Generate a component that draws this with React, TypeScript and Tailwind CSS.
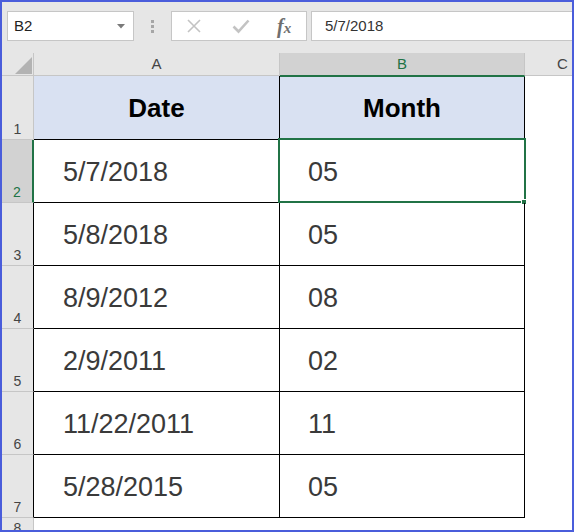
import React from "react";

const rows = [
  { n: 2, date: "5/7/2018", month: "05" },
  { n: 3, date: "5/8/2018", month: "05" },
  { n: 4, date: "8/9/2012", month: "08" },
  { n: 5, date: "2/9/2011", month: "02" },
  { n: 6, date: "11/22/2011", month: "11" },
  { n: 7, date: "5/28/2015", month: "05" },
];

function FormulaBar() {
  return (
    <div className="h-[51px] shrink-0 bg-[#e6e6e6] flex items-start pt-[9px] pl-[5px]">
      <div className="w-[127px] h-[30px] bg-white border border-[#c6c6c6] flex items-center justify-between pl-[6px] pr-[8px]">
        <span className="text-[15px] text-[#222]">B2</span>
        <svg width="8" height="5" viewBox="0 0 8 5">
          <polygon points="0,0 8,0 4,4.5" fill="#7a7a7a" />
        </svg>
      </div>
      <div className="w-[37px] h-[30px] flex flex-col items-center justify-center gap-[2px]">
        <span className="w-[3px] h-[3px] bg-[#a6a6a6]" />
        <span className="w-[3px] h-[3px] bg-[#a6a6a6]" />
        <span className="w-[3px] h-[3px] bg-[#a6a6a6]" />
      </div>
      <div className="w-[136px] h-[30px] bg-white border border-[#c6c6c6] flex items-center pl-[14px]">
        <svg width="16" height="16" viewBox="0 0 16 16">
          <path d="M2 2 L14 14 M14 2 L2 14" stroke="#c3c3c3" strokeWidth="1.6" fill="none" />
        </svg>
        <svg width="18" height="16" viewBox="0 0 18 16" className="ml-[30px]">
          <path d="M1.5 8.5 L6.5 13.5 L16.5 2.5" stroke="#c3c3c3" strokeWidth="2.6" fill="none" />
        </svg>
        <span className="ml-[27px] font-['Liberation_Serif',serif] italic font-bold text-[#6f6f6f] leading-none">
          <span className="text-[20px]">f</span>
          <span className="text-[15px]">x</span>
        </span>
      </div>
      <div className="flex-1 h-[30px] ml-[4px] bg-white border border-[#c6c6c6] border-r-0 flex items-center pl-[13px]">
        <span className="text-[15px] text-[#333]">5/7/2018</span>
      </div>
    </div>
  );
}

function ColumnHeaders() {
  return (
    <div className="h-[23px] shrink-0 flex text-[15px] text-[#444]">
      <div className="w-[32px] shrink-0 bg-[#e6e6e6] border-r border-b border-[#c6c6c6] flex items-end justify-end pr-[1px] pb-[1px]">
        <svg width="17" height="17" viewBox="0 0 17 17">
          <polygon points="17,0 17,17 0,17" fill="#b3b3b3" />
        </svg>
      </div>
      <div className="w-[246px] shrink-0 bg-[#e6e6e6] border-r border-b border-[#c6c6c6] flex items-center justify-center">
        A
      </div>
      <div className="w-[245px] shrink-0 relative z-10 bg-[#d2d2d2] border-r border-[#c6c6c6] border-b border-b-[#217346] shadow-[0_1px_0_#217346] flex items-center justify-center text-[#217346]">
        B
      </div>
      <div className="w-[75px] shrink-0 bg-[#e6e6e6] border-b border-[#c6c6c6] flex items-center justify-center">
        C
      </div>
    </div>
  );
}

export default function App() {
  return (
    <div className="w-[574px] h-[532px] border-2 border-[#4a5ddb] bg-white overflow-hidden flex flex-col font-['Liberation_Sans',Arial,sans-serif]">
      <FormulaBar />
      <ColumnHeaders />

      {/* header row */}
      <div className="h-[64px] shrink-0 flex">
        <div className="w-[32px] shrink-0 bg-[#e6e6e6] border-r border-b border-[#c6c6c6] flex items-end justify-center pb-[3px] text-[14px] leading-none text-[#444]">
          1
        </div>
        <div className="w-[246px] shrink-0 bg-[#d9e1f2] border-r border-b border-black flex items-center justify-center text-[26px] font-bold leading-none text-black">
          Date
        </div>
        <div className="w-[245px] shrink-0 bg-[#d9e1f2] border-r border-b border-black flex items-center justify-center text-[26px] font-bold leading-none text-black">
          Month
        </div>
        <div className="flex-1" />
      </div>

      {rows.map((r) => {
        const selected = r.n === 2;
        return (
          <div key={r.n} className="h-[63px] shrink-0 flex">
            <div
              className={
                selected
                  ? "w-[32px] shrink-0 bg-[#d2d2d2] border-b border-b-[#c6c6c6] border-r-2 border-r-[#217346] flex items-end justify-center pb-[3px] text-[14px] leading-none text-[#217346]"
                  : "w-[32px] shrink-0 bg-[#e6e6e6] border-b border-b-[#c6c6c6] border-r border-r-black flex items-end justify-center pb-[3px] text-[14px] leading-none text-[#444]"
              }
            >
              {r.n}
            </div>
            <div className="w-[246px] shrink-0 border-r border-b border-black flex items-center pl-[29px] text-[27px] leading-none text-[#3a3a3a]">
              <span className="translate-y-[1px]">{r.date}</span>
            </div>
            <div className="w-[245px] shrink-0 relative border-r border-b border-black flex items-center pl-[28px] text-[27px] leading-none text-[#3a3a3a]">
              <span className="translate-y-[1px]">{r.month}</span>
              {selected && (
                <>
                  <div className="absolute -left-[2px] -top-[2px] -right-[2px] -bottom-[1px] border-2 border-[#217346] pointer-events-none" />
                  <div className="absolute -right-[3px] -bottom-[3px] w-[6px] h-[6px] bg-[#217346] border border-white" />
                </>
              )}
            </div>
            <div className="flex-1" />
          </div>
        );
      })}

      {/* row 8, partly visible */}
      <div className="h-[20px] shrink-0 flex">
        <div className="w-[32px] shrink-0 bg-[#e6e6e6] border-r border-[#c6c6c6] flex items-end justify-center pb-[3px] text-[14px] leading-none text-[#444]">
          8
        </div>
        <div className="flex-1" />
      </div>
    </div>
  );
}
